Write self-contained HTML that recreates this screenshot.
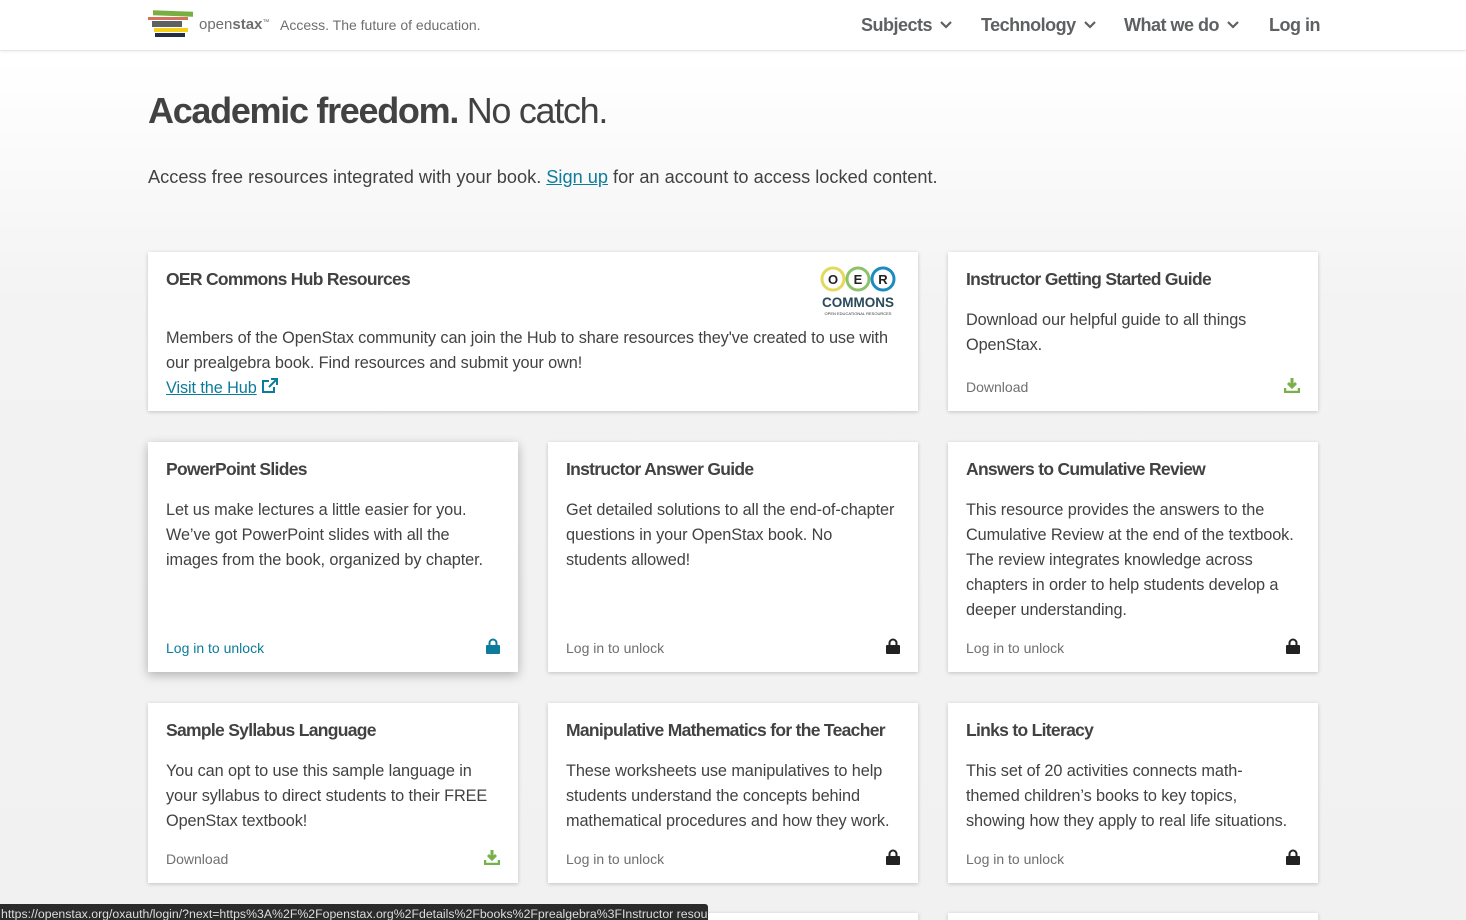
<!DOCTYPE html><html style="overflow:hidden;height:920px"><head><style>
*{box-sizing:border-box;margin:0;padding:0}
body{width:1466px;height:920px;overflow:hidden;font-family:"Liberation Sans",sans-serif;color:#424242;background:linear-gradient(#fff 60px,#f3f3f3 300px,#f1f1f1);position:relative}
.hdr{position:absolute;left:0;top:0;width:1466px;height:51px;background:#fff;border-bottom:1px solid #e6e6e6;box-shadow:0 1px 3px rgba(0,0,0,.06)}
.nav{position:absolute;top:15px;font-size:18px;font-weight:bold;color:#5e6062;letter-spacing:-.5px}
.nav svg{margin-left:8px;vertical-align:2px}
h1{position:absolute;left:148px;top:90px;font-size:36px;letter-spacing:-1.3px;color:#424242}
h1 span{font-weight:normal}
.intro{position:absolute;left:148px;top:167px;font-size:18.2px}
.intro a{color:#0c7c9a}
.card{position:absolute;background:#fff;box-shadow:0 1px 4px rgba(0,0,0,.2);padding:17px 18px}
.card h3{font-size:17.5px;letter-spacing:-.7px;color:#424242;margin-bottom:18px;white-space:nowrap}
.card p{font-size:16.3px;line-height:25px;letter-spacing:-.1px}
.nw{white-space:nowrap}
.ft{position:absolute;left:18px;bottom:16px;font-size:14px;color:#6f6f6f}
.ic{position:absolute;right:18px;bottom:18px}
</style></head><body>
<div class="hdr">
<div style="position:absolute;left:148px;top:11px;width:46px;height:28px">
<div style="position:absolute;left:5px;top:0;width:40px;height:5px;background:#77af42;transform:skewY(2deg)"></div>
<div style="position:absolute;left:0;top:6px;width:40px;height:3px;background:#d4735a"></div>
<div style="position:absolute;left:4px;top:10px;width:30px;height:6px;background:#5e6062"></div>
<div style="position:absolute;left:6px;top:17px;width:34px;height:4px;background:#f4d019"></div>
<div style="position:absolute;left:7px;top:22px;width:30px;height:4px;background:#232d46"></div>
</div>
<div style="position:absolute;left:199px;top:16px;font-size:15px;color:#6f6f6f">open<b>stax</b><span style="font-size:7px;vertical-align:5px">™</span></div>
<div style="position:absolute;left:280px;top:17px;font-size:14px;color:#6f6f6f">Access. The future of education.</div>
<div class="nav" style="left:861px">Subjects<svg width="12" height="8"><path d="M1 1l5 5 5-5" stroke="#5e6062" stroke-width="2.2" fill="none"/></svg></div>
<div class="nav" style="left:981px">Technology<svg width="12" height="8"><path d="M1 1l5 5 5-5" stroke="#5e6062" stroke-width="2.2" fill="none"/></svg></div>
<div class="nav" style="left:1124px">What we do<svg width="12" height="8"><path d="M1 1l5 5 5-5" stroke="#5e6062" stroke-width="2.2" fill="none"/></svg></div>
<div class="nav" style="left:1269px">Log in</div>
</div>
<h1>Academic freedom. <span>No catch.</span></h1>
<div class="intro">Access free resources integrated with your book. <a href="#">Sign up</a> for an account to access locked content.</div>

<div class="card" style="left:148px;top:252px;width:770px;height:159px">
<h3 style="margin-bottom:36px">OER Commons Hub Resources</h3>
<p>Members of the OpenStax community can join the Hub to share resources they've created to use with our prealgebra book. Find resources and submit your own!<br><a href="#" style="color:#0c7c9a">Visit the Hub</a> <svg width="18" height="16" style="vertical-align:-1px"><path d="M13 9v5H2V3h6M10 1h6v6M16 1L8 9" stroke="#0c7c9a" stroke-width="2" fill="none"/></svg></p>
<svg style="position:absolute;left:672px;top:13px" width="80" height="52"><circle cx="13" cy="14" r="11" fill="none" stroke="#e3da5b" stroke-width="3"/><circle cx="38" cy="14" r="11" fill="none" stroke="#8cc26a" stroke-width="3"/><circle cx="63" cy="14" r="11" fill="none" stroke="#1c8bbf" stroke-width="3"/><text x="13" y="19" font-size="13" font-weight="bold" text-anchor="middle" fill="#222">O</text><text x="38" y="19" font-size="13" font-weight="bold" text-anchor="middle" fill="#222">E</text><text x="63" y="19" font-size="13" font-weight="bold" text-anchor="middle" fill="#222">R</text><text x="38" y="42" font-size="13.5" font-weight="bold" text-anchor="middle" fill="#2a4a5a">COMMONS</text><text x="38" y="50" font-size="4" text-anchor="middle" fill="#333">OPEN EDUCATIONAL RESOURCES</text></svg>
</div>
<div class="card" style="left:948px;top:252px;width:370px;height:159px"><h3>Instructor Getting Started Guide</h3><p>Download our helpful guide to all things OpenStax.</p><div class="ft">Download</div><svg class="ic" width="16" height="16"><path d="M8 1v9M4 6l4 4 4-4" stroke="#78b04a" stroke-width="3" fill="none"/><path d="M1 11v4h14v-4" stroke="#78b04a" stroke-width="2.5" fill="none"/></svg></div>

<div class="card" style="left:148px;top:442px;width:370px;height:230px;box-shadow:0 3px 10px rgba(0,0,0,.28)"><h3>PowerPoint Slides</h3><p>Let us make lectures a little easier for you. We’ve got PowerPoint slides with all the images from the book, organized by chapter.</p><div class="ft" style="color:#0c7c9a">Log in to unlock</div><svg class="ic" width="14" height="16" style="right:18px"><path d="M3.5 7V5a3.5 3.5 0 0 1 7 0v2" stroke="#0c7c9a" stroke-width="2" fill="none"/><rect x="0" y="7" width="14" height="9" rx="1" fill="#0c7c9a"/></svg></div>
<div class="card" style="left:548px;top:442px;width:370px;height:230px"><h3>Instructor Answer Guide</h3><p class="nw">Get detailed solutions to all the end-of-chapter<br>questions in your OpenStax book. No<br>students allowed!</p><div class="ft">Log in to unlock</div><svg class="ic" width="14" height="16"><path d="M3.5 7V5a3.5 3.5 0 0 1 7 0v2" stroke="#222" stroke-width="2" fill="none"/><rect x="0" y="7" width="14" height="9" rx="1" fill="#222"/></svg></div>
<div class="card" style="left:948px;top:442px;width:370px;height:230px"><h3>Answers to Cumulative Review</h3><p>This resource provides the answers to the Cumulative Review at the end of the textbook. The review integrates knowledge across chapters in order to help students develop a deeper understanding.</p><div class="ft">Log in to unlock</div><svg class="ic" width="14" height="16"><path d="M3.5 7V5a3.5 3.5 0 0 1 7 0v2" stroke="#222" stroke-width="2" fill="none"/><rect x="0" y="7" width="14" height="9" rx="1" fill="#222"/></svg></div>

<div class="card" style="left:148px;top:703px;width:370px;height:180px"><h3>Sample Syllabus Language</h3><p>You can opt to use this sample language in your syllabus to direct students to their FREE OpenStax textbook!</p><div class="ft">Download</div><svg class="ic" width="16" height="16"><path d="M8 1v9M4 6l4 4 4-4" stroke="#78b04a" stroke-width="3" fill="none"/><path d="M1 11v4h14v-4" stroke="#78b04a" stroke-width="2.5" fill="none"/></svg></div>
<div class="card" style="left:548px;top:703px;width:370px;height:180px"><h3>Manipulative Mathematics for the Teacher</h3><p>These worksheets use manipulatives to help students understand the concepts behind mathematical procedures and how they work.</p><div class="ft">Log in to unlock</div><svg class="ic" width="14" height="16"><path d="M3.5 7V5a3.5 3.5 0 0 1 7 0v2" stroke="#222" stroke-width="2" fill="none"/><rect x="0" y="7" width="14" height="9" rx="1" fill="#222"/></svg></div>
<div class="card" style="left:948px;top:703px;width:370px;height:180px"><h3>Links to Literacy</h3><p class="nw">This set of 20 activities connects math-<br>themed children’s books to key topics,<br>showing how they apply to real life situations.</p><div class="ft">Log in to unlock</div><svg class="ic" width="14" height="16"><path d="M3.5 7V5a3.5 3.5 0 0 1 7 0v2" stroke="#222" stroke-width="2" fill="none"/><rect x="0" y="7" width="14" height="9" rx="1" fill="#222"/></svg></div>

<div class="card" style="left:548px;top:913px;width:370px;height:7px;padding:0"></div>
<div class="card" style="left:948px;top:913px;width:370px;height:7px;padding:0"></div>
<div style="position:absolute;left:0;top:904px;width:708px;height:16px;background:#2b2b2b;border-top-right-radius:3px;color:#ddd;font-size:12.3px;line-height:20px;white-space:nowrap;overflow:hidden;padding-left:1px">https://openstax.org/oxauth/login/?next=https%3A%2F%2Fopenstax.org%2Fdetails%2Fbooks%2Fprealgebra%3FInstructor resources</div>
</body></html>
